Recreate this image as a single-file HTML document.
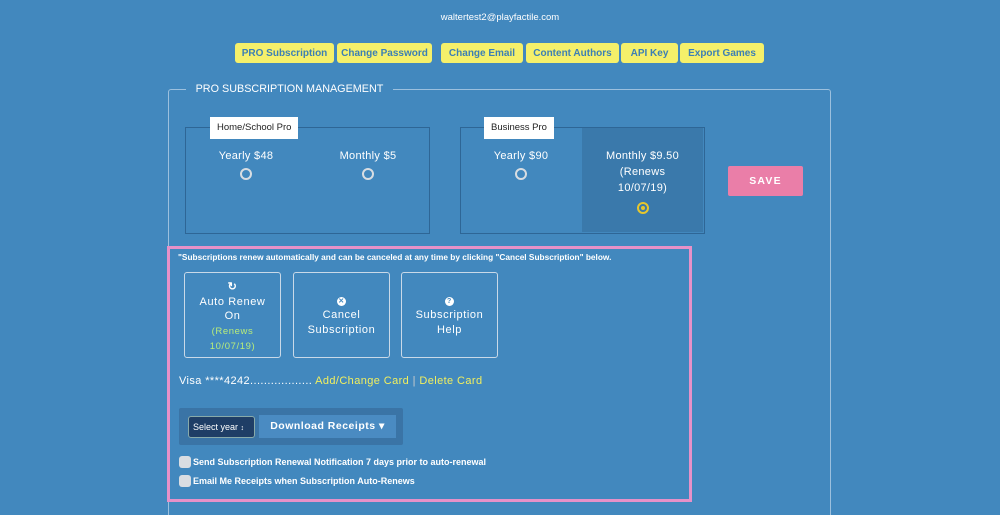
<!DOCTYPE html>
<html><head><meta charset="utf-8"><style>
*{box-sizing:border-box;margin:0;padding:0}
html,body{width:1000px;height:515px;overflow:hidden}
body{background:#4288be;font-family:"Liberation Sans",sans-serif;color:#fff;position:relative}
.a{position:absolute;white-space:nowrap}
.btn{position:absolute;top:43px;height:20px;background:#f5f06a;border-radius:3px;color:#3c7fb5;font-weight:bold;font-size:10px;text-align:center;line-height:21px;white-space:nowrap}
.box{position:absolute;border:1.5px solid #2e6696}
.lab{position:absolute;background:#fff;color:#222;font-size:9.5px;height:22px;line-height:22px;padding:0 7px;white-space:nowrap}
.opt{position:absolute;font-size:11px;text-align:center;line-height:16px;letter-spacing:.3px}
.rad{position:absolute;width:12px;height:12px;border-radius:50%;border:2.5px solid #d8dde2}
.tile{position:absolute;top:272px;width:97px;height:86px;border:1.5px solid #c9d9e8;border-radius:3px;text-align:center;font-size:11px;line-height:14.5px;letter-spacing:.6px}
.ic{display:inline-block;width:9px;height:9px;border-radius:50%;background:#fff;color:#4288be;font-size:7px;line-height:9px;font-weight:bold;margin-bottom:2px}
.cb{position:absolute;left:179px;width:12px;height:12px;background:#d9dde2;border-radius:3px}
.ct{position:absolute;left:193px;font-size:9px;font-weight:bold;white-space:nowrap}
</style></head><body>
<div class="a" style="left:0;width:1000px;top:12px;text-align:center;font-size:9.5px">waltertest2@playfactile.com</div>
<div class="btn" style="left:235px;width:99px">PRO Subscription</div>
<div class="btn" style="left:337px;width:95px">Change Password</div>
<div class="btn" style="left:441px;width:82px">Change Email</div>
<div class="btn" style="left:526px;width:93px">Content Authors</div>
<div class="btn" style="left:621px;width:57px">API Key</div>
<div class="btn" style="left:680px;width:84px">Export Games</div>

<div class="a" style="left:168px;top:89px;width:663px;height:440px;border:1px solid #9cc0de;border-radius:3px"></div>
<div class="a" style="left:186px;top:81px;width:207px;height:16px;background:#4288be;text-align:center;font-size:10.8px;line-height:16px">PRO SUBSCRIPTION MANAGEMENT</div>

<div class="box" style="left:185px;top:127px;width:245px;height:107px"></div>
<div class="lab" style="left:210px;top:117px">Home/School Pro</div>
<div class="opt" style="left:200px;top:148px;width:92px">Yearly $48</div>
<div class="rad" style="left:240px;top:168px"></div>
<div class="opt" style="left:322px;top:148px;width:92px">Monthly $5</div>
<div class="rad" style="left:362px;top:168px"></div>

<div class="box" style="left:460px;top:127px;width:245px;height:107px"></div>
<div class="a" style="left:582px;top:128px;width:121px;height:104px;background:#3a79ab"></div>
<div class="lab" style="left:484px;top:117px">Business Pro</div>
<div class="opt" style="left:475px;top:148px;width:92px">Yearly $90</div>
<div class="rad" style="left:515px;top:168px"></div>
<div class="opt" style="left:582px;top:148px;width:121px">Monthly $9.50<br>(Renews<br>10/07/19)</div>
<div class="rad" style="left:637px;top:202px;border-color:#e6c72e;border-width:2.5px"><div style="position:absolute;left:1.5px;top:1.5px;width:4px;height:4px;border-radius:50%;background:#e6c72e"></div></div>

<div class="a" style="left:728px;top:166px;width:75px;height:30px;background:#ea7ea8;border-radius:2px;text-align:center;line-height:30px;font-size:10.5px;font-weight:bold;letter-spacing:1.2px">SAVE</div>

<div class="a" style="left:167px;top:246px;width:525px;height:256px;border:3px solid #e691c8"></div>
<div class="a" style="left:178px;top:252px;font-size:8.3px;font-weight:bold">"Subscriptions renew automatically and can be canceled at any time by clicking "Cancel Subscription" below.</div>

<div class="tile" style="left:184px;padding-top:7px"><span style="font-size:11px;font-weight:bold">&#x21BB;</span><br>Auto Renew<br>On<br><span style="color:#b8ec7a;font-size:9.5px">(Renews<br>10/07/19)</span></div>
<div class="tile" style="left:293px;padding-top:20px"><span class="ic">✕</span><br>Cancel<br>Subscription</div>
<div class="tile" style="left:401px;padding-top:20px"><span class="ic">?</span><br>Subscription<br>Help</div>

<div class="a" style="left:179px;top:375px;font-size:11px;letter-spacing:.4px">Visa ****4242.................. <span style="color:#f2ef5e">Add/Change Card</span> <span style="color:#ccc">|</span> <span style="color:#f2ef5e">Delete Card</span></div>

<div class="a" style="left:179px;top:408px;width:224px;height:37px;background:#3a74a6;border-radius:2px"></div>
<div class="a" style="left:188px;top:416px;width:67px;height:22px;background:#1f3e66;border:1px solid #8aa;border-radius:3px;font-size:9px;line-height:20px;padding-left:4px">Select year <span style="font-size:7px">&#x2195;</span></div>
<div class="a" style="left:259px;top:415px;width:137px;height:23px;background:#4a8bc2;font-size:10.5px;font-weight:bold;line-height:23px;text-align:center;letter-spacing:.5px">Download Receipts ▾</div>

<div class="cb" style="top:456px"></div><div class="ct" style="top:457px">Send Subscription Renewal Notification 7 days prior to auto-renewal</div>
<div class="cb" style="top:475px"></div><div class="ct" style="top:476px">Email Me Receipts when Subscription Auto-Renews</div>
</body></html>
